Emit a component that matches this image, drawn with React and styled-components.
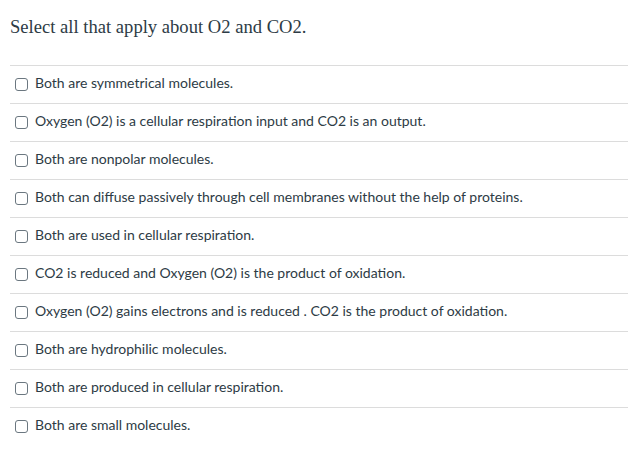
import React from 'react';
import styled, { createGlobalStyle } from 'styled-components';

const GlobalStyle = createGlobalStyle`
  body {
    margin: 0;
    background: #fff;
  }
`;

const options = [
  'Both are symmetrical molecules.',
  'Oxygen (O2) is a cellular respiration input and CO2 is an output.',
  'Both are nonpolar molecules.',
  'Both can diffuse passively through cell membranes without the help of proteins.',
  'Both are used in cellular respiration.',
  'CO2 is reduced and Oxygen (O2) is the product of oxidation.',
  'Oxygen (O2) gains electrons and is reduced . CO2 is the product of oxidation.',
  'Both are hydrophilic molecules.',
  'Both are produced in cellular respiration.',
  'Both are small molecules.'
];

const Page = styled.div`
  padding: 0 0 0 10px;
  color: #2d3b45;
`;

const Question = styled.div`
  font-family: "Liberation Serif", "Times New Roman", serif;
  font-size: 18.6px;
  line-height: 22px;
  padding: 16px 0 27px 0;
`;

const Answers = styled.div`
  display: flex;
  flex-direction: column;
`;

const Row = styled.label`
  display: flex;
  align-items: center;
  gap: 7px;
  height: 37px;
  padding-left: 5px;
  border-top: 1px solid #dcdcdc;
  font-family: Lato, "Open Sans", sans-serif;
  font-size: 14px;
`;

const Box = styled.span`
  width: 11px;
  height: 11px;
  border: 1px solid #6b7780;
  border-radius: 3px;
  background: #fff;
  flex-shrink: 0;
`;

const Text = styled.span`
  margin-bottom: 4px;
`;

export default function App() {
  return (
    <>
      <GlobalStyle />
      <Page>
        <Question>Select all that apply about O2 and CO2.</Question>
        <Answers>
          {options.map((text) => (
            <Row key={text}>
              <Box />
              <Text>{text}</Text>
            </Row>
          ))}
        </Answers>
      </Page>
    </>
  );
}
